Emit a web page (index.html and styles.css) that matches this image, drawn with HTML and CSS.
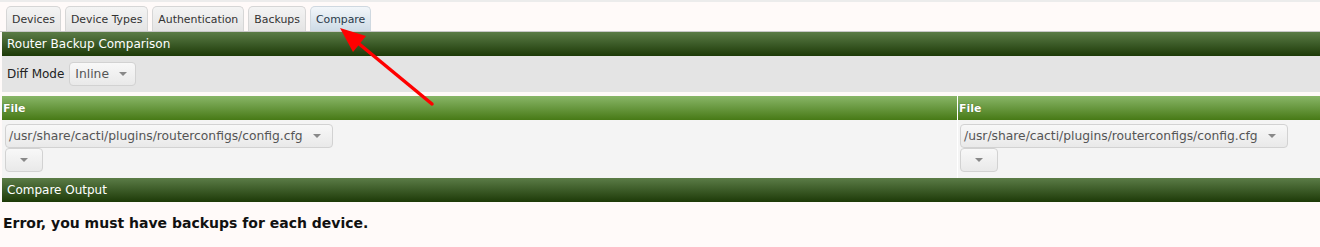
FILE: index.html
```html
<!DOCTYPE html>
<html>
<head>
<meta charset="utf-8">
<link rel="stylesheet" href="styles.css">
</head>
<body>
<div class="topline"></div>
<nav class="tabs">
  <a class="tab">Devices</a>
  <a class="tab">Device Types</a>
  <a class="tab">Authentication</a>
  <a class="tab">Backups</a>
  <a class="tab active">Compare</a>
</nav>
<div class="page">
  <div class="hdr dark">Router Backup Comparison</div>
  <div class="filter">
    <span class="lbl">Diff Mode</span>
    <span class="sel sel-mode">Inline<i class="caret"></i></span>
  </div>
  <div class="spacer"></div>
  <div class="cols">
    <div class="col left">
      <div class="hdr light">File</div>
      <div class="cell">
        <span class="sel sel-file">/usr/share/cacti/plugins/routerconfigs/config.cfg<i class="caret"></i></span>
        <span class="sel sel-empty"><i class="caret"></i></span>
      </div>
    </div>
    <div class="col right">
      <div class="hdr light">File</div>
      <div class="cell">
        <span class="sel sel-file">/usr/share/cacti/plugins/routerconfigs/config.cfg<i class="caret"></i></span>
        <span class="sel sel-empty"><i class="caret"></i></span>
      </div>
    </div>
  </div>
  <div class="hdr dark">Compare Output</div>
  <p class="error">Error, you must have backups for each device.</p>
</div>
<svg class="arrow" width="120" height="100" viewBox="0 0 120 100">
  <line x1="112" y1="96" x2="32" y2="30" stroke="#f00" stroke-width="3.5" stroke-linecap="round"/>
  <polygon points="20,20 46,28 33,44" fill="#f00"/>
</svg>
</body>
</html>
```
FILE: styles.css
```css
html, body {
  margin: 0;
  padding: 0;
  background: #fffaf9;
  font-family: "DejaVu Sans", Verdana, sans-serif;
  font-size: 11px;
  color: #222;
}
body { position: relative; width: 1320px; height: 247px; overflow: hidden; }
.topline { height: 2px; background: #ececec; }
.tabs {
  display: flex;
  gap: 4px;
  padding: 4px 0 0 6px;
  height: 25px;
  border-bottom: 1px solid #c8c8c8;
  box-sizing: content-box;
}
.tab {
  display: flex;
  align-items: center;
  padding: 0 5px;
  height: 25px;
  box-sizing: border-box;
  border: 1px solid #d6d6d6;
  border-bottom: none;
  border-radius: 5px 5px 0 0;
  background: linear-gradient(#f4f4f4, #e4e4e4);
  color: #333;
  font-size: 10.9px;
}
.tab.active {
  background: linear-gradient(#f2f6fa, #cddbe6);
  border-color: #cfd8e0;
  color: #2a3a4a;
}
.page { padding-left: 2px; }
.hdr {
  height: 24px;
  display: flex;
  align-items: center;
  color: #fff;
  font-size: 12px;
  box-sizing: border-box;
}
.hdr.dark {
  padding-left: 5px;
  background: linear-gradient(#5b7c47, #1d3a08);
}
.hdr.light {
  padding-left: 1px;
  background: linear-gradient(#89b668, #477a16);
  font-size: 11px;
  font-weight: bold;
  text-shadow: 0 0 1px #2a4a10;
}
.filter {
  height: 36px;
  background: #e4e4e4;
  display: flex;
  align-items: center;
  padding-left: 5px;
  gap: 5px;
}
.lbl { font-size: 12px; color: #222; }
.spacer { height: 4px; }
.sel {
  display: inline-flex;
  align-items: center;
  justify-content: space-between;
  height: 24px;
  box-sizing: border-box;
  border: 1px solid #d2d2d2;
  border-radius: 4px;
  background: linear-gradient(#f8f8f8, #e9e9e9);
  color: #555;
  font-size: 12.3px;
  padding: 0 8px 0 5px;
}
.caret {
  width: 0; height: 0;
  border-left: 4px solid transparent;
  border-right: 4px solid transparent;
  border-top: 4px solid #888;
  margin-left: 8px;
}
.sel-mode { width: 67px; }
.sel-file { width: 328px; padding-left: 3px; padding-right: 11px; }
.sel-empty { width: 38px; justify-content: center; padding: 0; }
.sel-empty .caret { margin: 0; }
.cols { display: flex; }
.col.left { width: 955px; border-right: 1px solid #fff; }
.col.left .cell { padding-left: 3px; }
.col.right { flex: 1; }
.cell {
  background: #f4f4f4;
  height: 58px;
  padding: 4px 0 0 2px;
  box-sizing: border-box;
  display: flex;
  flex-direction: column;
  align-items: flex-start;
}
.error {
  margin: 13px 0 0 1px;
  font-weight: bold;
  font-size: 14px;
  color: #111;
}
.arrow { position: absolute; left: 320px; top: 8px; }
```
